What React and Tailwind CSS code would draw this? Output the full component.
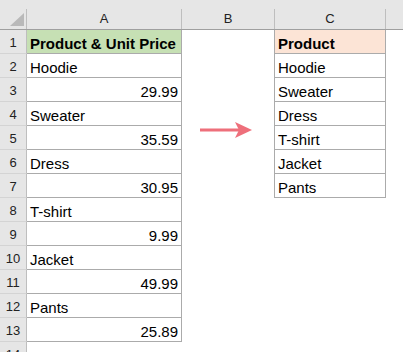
const rowsA = [
  { text: 'Product & Unit Price', bold: true, fill: 'bg-[#c6e0b4]' },
  { text: 'Hoodie' },
  { text: '29.99', right: true },
  { text: 'Sweater' },
  { text: '35.59', right: true },
  { text: 'Dress' },
  { text: '30.95', right: true },
  { text: 'T-shirt' },
  { text: '9.99', right: true },
  { text: 'Jacket' },
  { text: '49.99', right: true },
  { text: 'Pants' },
  { text: '25.89', right: true },
]

const rowsC = [
  { text: 'Product', bold: true, fill: 'bg-[#fce4d6]' },
  { text: 'Hoodie' },
  { text: 'Sweater' },
  { text: 'Dress' },
  { text: 'T-shirt' },
  { text: 'Jacket' },
  { text: 'Pants' },
]

function Cell({ cell, className }) {
  if (!cell) return <div className={className} />
  return (
    <div
      className={`${className} ${cell.fill || ''} flex items-end px-[3px] leading-[18px] ${
        cell.right ? 'justify-end' : ''
      } ${cell.bold ? 'font-bold' : ''}`}
    >
      <span className="whitespace-nowrap">{cell.text}</span>
    </div>
  )
}

function Arrow() {
  return (
    <svg width="56" height="20" viewBox="0 0 56 20" className="absolute left-[199px] top-[120px]">
      <line x1="1" y1="10" x2="42" y2="10" stroke="#ee6f7b" strokeWidth="3" />
      <polygon points="36,2 53,10 36,18 40,10" fill="#ee6f7b" />
    </svg>
  )
}

export default function App() {
  const rows = Array.from({ length: 14 }, (_, i) => i)
  return (
    <div
      className="relative w-[403px] h-[352px] overflow-hidden bg-white text-[15px] text-black"
      style={{ fontFamily: '"Liberation Sans", Arial, sans-serif' }}
    >
      {/* column headers */}
      <div className="h-[30px] bg-[#e6e6e6] border-b border-[#9f9f9f] flex items-end">
        <div className="w-[27px] h-[20px] border-r border-[#bebebe] relative">
          <svg width="14" height="14" className="absolute left-[10px] top-[4px]">
            <polygon points="14,0 14,13 0,13" fill="#b9b9b9" />
          </svg>
        </div>
        <div className="w-[155px] h-[20px] border-r border-[#bebebe] flex items-center justify-center text-[13px] text-[#222]">A</div>
        <div className="w-[93px] h-[20px] border-r border-[#bebebe] flex items-center justify-center text-[13px] text-[#222]">B</div>
        <div className="w-[111px] h-[20px] border-r border-[#bebebe] flex items-center justify-center text-[13px] text-[#222]">C</div>
        <div className="flex-1 h-[20px]" />
      </div>

      {rows.map((i) => {
        const a = rowsA[i]
        const c = rowsC[i]
        return (
          <div key={i} className="flex h-[24px]">
            <div className="w-[27px] bg-[#e6e6e6] border-r border-b border-r-[#bebebe] border-b-[#d4d4d4] flex items-center justify-center text-[13px] text-[#222] pt-[3px]">
              {i + 1}
            </div>
            <Cell
              cell={a}
              className={`w-[155px] ${a ? 'border-r border-b border-[#ababab]' : ''}`}
            />
            <div className="w-[92px]" />
            <Cell
              cell={c}
              className={`w-[112px] ${c ? 'border-x border-b border-[#ababab]' : ''}`}
            />
          </div>
        )
      })}

      <Arrow />
    </div>
  )
}
